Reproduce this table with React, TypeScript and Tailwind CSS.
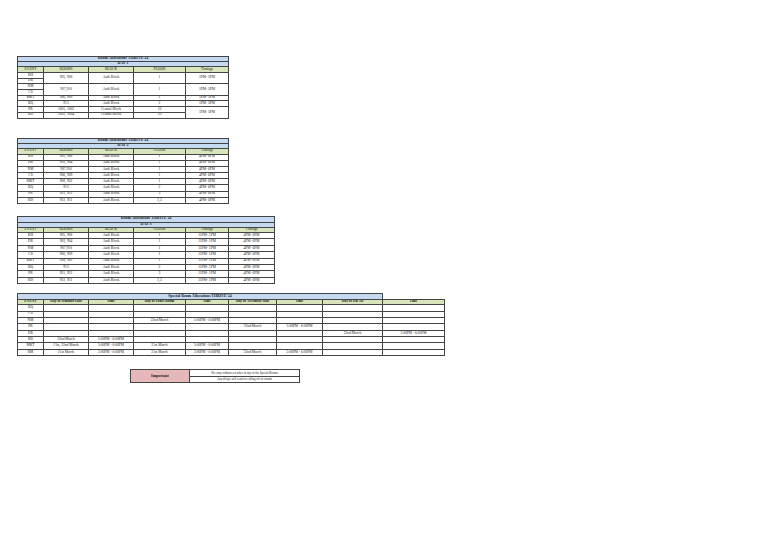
import React from 'react';

const cell = 'border border-[#444] p-0 text-center align-middle leading-none whitespace-nowrap overflow-hidden';
const head = `${cell} bg-[#d8e4bc]`;
const band = `${cell} bg-[#c5d9f1] font-bold text-[3.9px]`;

const Cols: React.FC<{ widths: number[] }> = ({ widths }) => (
  <colgroup>
    {widths.map((w, i) => (
      <col key={i} style={{ width: w }} />
    ))}
  </colgroup>
);

const mainCols = [26, 45, 45, 52, 43];

const Day1 = () => (
  <table className="table-fixed border-collapse w-[211px] mt-[1px]">
    <Cols widths={mainCols} />
    <tbody>
      <tr className="h-[5px]">
        <td colSpan={5} className={band}>Room Allocations THRIVE&apos;24</td>
      </tr>
      <tr className="h-[5px]">
        <td colSpan={5} className={band}>DAY 1</td>
      </tr>
      <tr className="h-[6px]">
        <td className={head}>EVENT</td>
        <td className={head}>ROOMS</td>
        <td className={head}>BLOCK</td>
        <td className={head}>FLOOR</td>
        <td className={head}>Timings</td>
      </tr>
      <tr className="h-[5.7px]">
        <td className={cell}>BH</td>
        <td rowSpan={2} className={cell}>905, 906</td>
        <td rowSpan={2} className={cell}>Audi Block</td>
        <td rowSpan={2} className={cell}>1</td>
        <td rowSpan={2} className={cell}>1PM- 5PM</td>
      </tr>
      <tr className="h-[5.7px]">
        <td className={cell}>DR</td>
      </tr>
      <tr className="h-[5.7px]">
        <td className={cell}>NM</td>
        <td rowSpan={2} className={cell}>907,910</td>
        <td rowSpan={2} className={cell}>Audi Block</td>
        <td rowSpan={2} className={cell}>1</td>
        <td rowSpan={2} className={cell}>1PM- 5PM</td>
      </tr>
      <tr className="h-[5.7px]">
        <td className={cell}>CS</td>
      </tr>
      <tr className="h-[5.7px]">
        <td className={cell}>MKT</td>
        <td className={cell}>906, 909</td>
        <td className={cell}>Audi Block</td>
        <td className={cell}>1</td>
        <td className={cell}>1PM- 5PM</td>
      </tr>
      <tr className="h-[5.7px]">
        <td className={cell}>BQ</td>
        <td className={cell}>913</td>
        <td className={cell}>Audi Block</td>
        <td className={cell}>2</td>
        <td className={cell}>1PM- 5PM</td>
      </tr>
      <tr className="h-[5.7px]">
        <td className={cell}>PR</td>
        <td className={cell}>1001, 1002</td>
        <td className={cell}>Central Block</td>
        <td className={cell}>10</td>
        <td rowSpan={2} className={cell}>1PM- 5PM</td>
      </tr>
      <tr className="h-[5.7px]">
        <td className={cell}>BD</td>
        <td className={cell}>1003, 1004</td>
        <td className={cell}>Central Block</td>
        <td className={cell}>10</td>
      </tr>
    </tbody>
  </table>
);

const day2Rows = [
  ['BH', '905, 906', '1'],
  ['DR', '903, 904', '1'],
  ['NM', '907,910', '1'],
  ['CS', '906, 909', '1'],
  ['MKT', '908, 902', '1'],
  ['BQ', '913', '2'],
  ['PR', '921, 922', '3'],
  ['BD', '923, 931', '2,3'],
];

const Day2 = () => (
  <table className="table-fixed border-collapse w-[211px] mt-[19px]">
    <Cols widths={mainCols} />
    <tbody>
      <tr className="h-[5px]">
        <td colSpan={5} className={band}>Room Allocations THRIVE&apos;24</td>
      </tr>
      <tr className="h-[5px]">
        <td colSpan={5} className={band}>DAY 2</td>
      </tr>
      <tr className="h-[6px]">
        <td className={head}>EVENT</td>
        <td className={head}>ROOMS</td>
        <td className={head}>BLOCK</td>
        <td className={head}>FLOOR</td>
        <td className={head}>Timings</td>
      </tr>
      {day2Rows.map(([ev, room, floor]) => (
        <tr key={ev} className="h-[6.2px]">
          <td className={cell}>{ev}</td>
          <td className={cell}>{room}</td>
          <td className={cell}>Audi Block</td>
          <td className={cell}>{floor}</td>
          <td className={cell}>4PM- 6PM</td>
        </tr>
      ))}
    </tbody>
  </table>
);

const Day3 = () => (
  <table className="table-fixed border-collapse w-[257px] mt-[12px]">
    <Cols widths={[26, 45, 45, 52, 43, 46]} />
    <tbody>
      <tr className="h-[5.5px]">
        <td colSpan={6} className={band}>Room Allocations THRIVE&apos;24</td>
      </tr>
      <tr className="h-[5px]">
        <td colSpan={6} className={band}>DAY 3</td>
      </tr>
      <tr className="h-[5.5px]">
        <td className={head}>EVENT</td>
        <td className={head}>ROOMS</td>
        <td className={head}>BLOCK</td>
        <td className={head}>FLOOR</td>
        <td className={head}>Timings</td>
        <td className={head}>Timings</td>
      </tr>
      {day2Rows.map(([ev, room, floor]) => (
        <tr key={ev} className="h-[6.4px]">
          <td className={cell}>{ev}</td>
          <td className={cell}>{room}</td>
          <td className={cell}>Audi Block</td>
          <td className={cell}>{floor}</td>
          <td className={cell}>11PM- 1PM</td>
          <td className={cell}>4PM- 6PM</td>
        </tr>
      ))}
    </tbody>
  </table>
);

const T = '5:00PM - 6:00PM';
const specialRows: string[][] = [
  ['BQ', '', '', '', '', '', '', '', ''],
  ['CS', '', '', '', '', '', '', '', ''],
  ['NM', '', '', '22nd March', T, '', '', '', ''],
  ['PR', '', '', '', '', '22nd March', T, '', ''],
  ['DR', '', '', '', '', '', '', '22nd March', T],
  ['BD', '22nd March', T, '', '', '', '', '', ''],
  ['MKT', '21st, 22nd March', T, '21st March', T, '', '', '', ''],
  ['BM', '21st March', T, '21st March', T, '22nd March', T, '', ''],
];

const Special = () => (
  <table className="table-fixed border-collapse w-[427px] mt-[9px]">
    <Cols widths={[26, 45, 45, 52, 43, 48, 46, 60, 62]} />
    <tbody>
      <tr className="h-[6px]">
        <td colSpan={8} className={band}>Special Room Allocations THRIVE&apos;24</td>
        <td className="p-0 border-0 border-b border-[#444]"></td>
      </tr>
      <tr className="h-[5px]">
        {['EVENT', 'Day of Seminar Hall', 'Time', 'Day of Panel Room', 'Time', 'Day of Assembly Hall', 'Time', 'Day of OK ID', 'Time'].map(
          (h, i) => (
            <td key={i} className={`${head} font-bold`}>
              {h}
            </td>
          )
        )}
      </tr>
      {specialRows.map((r) => (
        <tr key={r[0]} className="h-[6.4px]">
          {r.map((c, i) => (
            <td key={i} className={cell}>
              {c}
            </td>
          ))}
        </tr>
      ))}
    </tbody>
  </table>
);

const Important = () => (
  <div className="flex mt-[13px] ml-[113px] h-[14px]">
    <div className="w-[60px] bg-[#e6b8b7] border border-[#444] flex items-center justify-center font-bold text-[4px]">
      Important
    </div>
    <div className="w-[110px] flex flex-col border border-l-0 border-[#444] text-[3px]">
      <div className="flex-1 flex items-center justify-center border-b border-[#444] leading-none">
        No entry without a teacher in any of the Special Rooms
      </div>
      <div className="flex-1 flex items-center justify-center leading-none">
        Any delays will result in calling off of rounds
      </div>
    </div>
  </div>
);

export default function App() {
  return (
    <div className="w-[768px] h-[543px] bg-white pl-[17px] pt-[55px] text-[3.6px] text-[#222] font-['Liberation_Serif',serif] overflow-hidden">
      <Day1 />
      <Day2 />
      <Day3 />
      <Special />
      <Important />
    </div>
  );
}
